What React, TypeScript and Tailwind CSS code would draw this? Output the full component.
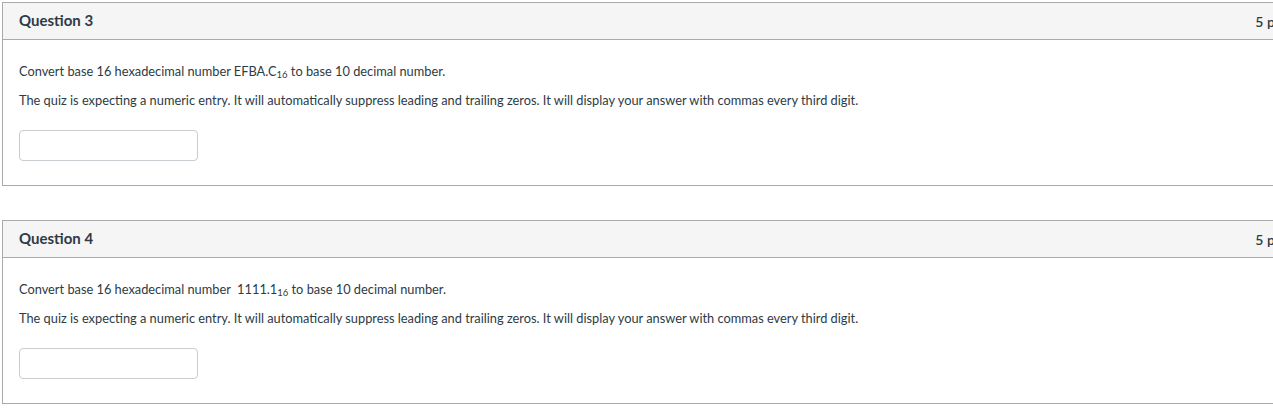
import React from "react";

function Question({ num, value }: { num: number; value: React.ReactNode }) {
  return (
    <div className="w-[1301px] border border-[#aaaaaa] bg-white">
      <div className="h-[37px] flex items-center justify-between bg-[#f5f5f5] border-b border-[#aaaaaa] pl-[16px] pr-[16px]">
        <span className="text-[15px] font-bold text-[#2d3b45] -mt-[1px]">Question {num}</span>
        <span className="text-[14px] text-[#2d3b45] font-semibold">5 pts</span>
      </div>
      <div className="pl-[16px] pt-[22px] pb-[24px] text-[12.8px] leading-[18px] text-[#2d3b45]">
        <p>
          Convert base 16 hexadecimal number {value} to base 10 decimal number.
        </p>
        <p className="mt-[11px]">
          The quiz is expecting a numeric entry. It will automatically suppress leading and trailing zeros. It will display your answer with commas every third digit.
        </p>
        <input
          type="text"
          className="mt-[21px] block w-[179px] h-[31px] border border-[#c7cdd1] rounded-[4px] bg-white outline-none"
        />
      </div>
    </div>
  );
}

export default function App() {
  return (
    <div
      className="w-[1273px] h-[409px] overflow-hidden bg-white pl-[2px] pt-[2px]"
      style={{ fontFamily: "Lato, 'Liberation Sans', sans-serif" }}
    >
      <Question
        num={3}
        value={
          <>
            EFBA.C<sub className="text-[9.5px]">16</sub>
          </>
        }
      />
      <div className="h-[34px]" />
      <Question
        num={4}
        value={
          <>
            {"\u00a0"}1111.1<sub className="text-[9.5px]">16</sub>
          </>
        }
      />
    </div>
  );
}
